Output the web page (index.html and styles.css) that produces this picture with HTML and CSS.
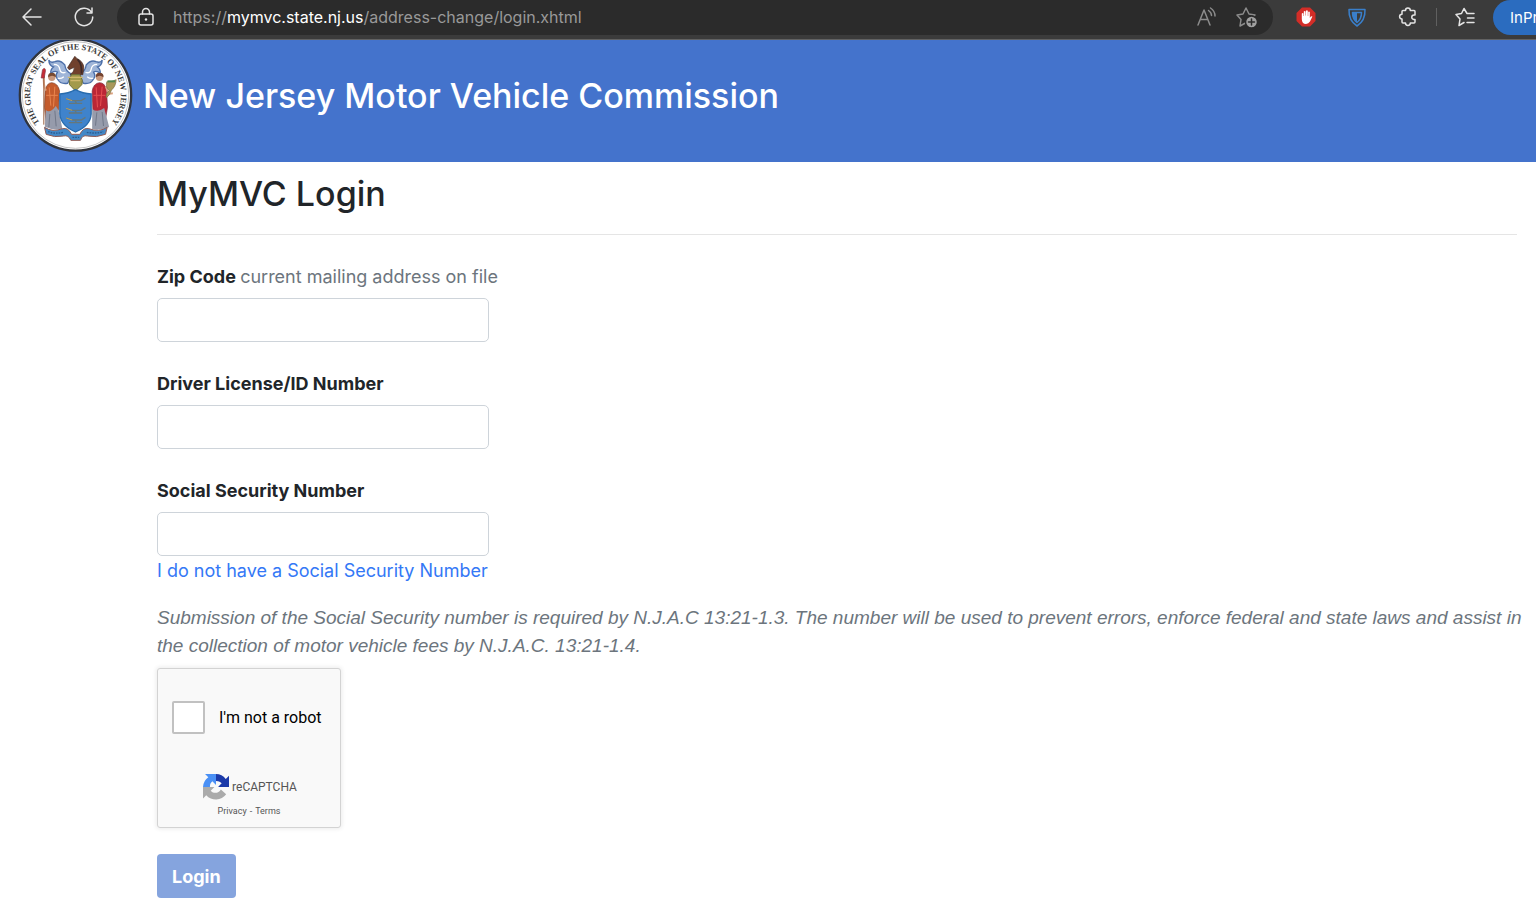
FILE: index.html
```
<!DOCTYPE html>
<html lang="en">
<head>
    <meta charset="UTF-8">
    <title>MyMVC Login</title>
    <link rel="stylesheet" href="styles.css">
</head>
<body>
    <!-- browser toolbar -->
    <div class="toolbar">
        <button class="tool back" aria-label="Back">
            <svg width="22" height="22" viewBox="0 0 22 22"><path d="M20 11H2M10 3L2 11l8 8"/></svg>
        </button>
        <button class="tool reload" aria-label="Refresh">
            <svg width="22" height="22" viewBox="0 0 22 22"><path d="M18.500 6.500A8.700 8.700 0 1 0 19.700 11M19 2v5h-5"/></svg>
        </button>
        <div class="address">
            <svg class="lock" width="18" height="20" viewBox="0 0 18 20"><rect x="2" y="7" width="14" height="11" rx="2"/><path d="M5.500 7V5a3.500 3.500 0 0 1 7 0v2"/><circle class="dot" cx="9" cy="12.500" r="1.200"/></svg>
            <span class="url">https://<span class="host">mymvc.state.nj.us</span>/address-change/login.xhtml</span>
            <button class="tool dim" aria-label="Read aloud">
                <svg width="22" height="22" viewBox="0 0 22 22"><path d="M2 19L8 4l6 15M4.500 13.500h7M12.500 4.500q3 2 3 5M14.500 2q4.500 3 4.500 8"/></svg>
            </button>
            <button class="tool dim" aria-label="Add to favorites">
                <svg width="22" height="22" viewBox="0 0 22 22"><path d="M9.500 17l-5.500 3 1-6.500-4-4.500 6-1L10 2l3 6 6 1-2 2"/><circle class="plus-bg" cx="15.500" cy="16" r="6"/><path class="plus" d="M15.500 13v6M12.500 16h6"/></svg>
            </button>
        </div>
        <div class="extensions">
            <button class="tool" aria-label="Ad blocker">
                <svg width="20" height="20" viewBox="0 0 20 20"><path fill="#d32d27" stroke="none" d="M6 .5h8L19.500 6v8L14 19.500H6L.5 14V6z"/><path fill="#fff" stroke="none" d="M5.800 12V6.500q.8-1 1.600 0V9h.4V4.500q.9-1 1.800 0V8.500h.4V3.800q.9-1 1.800 0V9h.4V5q.8-.9 1.600 0v6l1-1.500q1-.7 1.600.1l-2.400 5q-1.500 2.400-4 2.400-4.200 0-4.200-5z"/></svg>
            </button>
            <button class="tool" aria-label="Privacy shield">
                <svg width="20" height="20" viewBox="0 0 20 20"><path class="shield-line" d="M2 2.500h16q.5 11-8 16.500Q1.500 13.500 2 2.500z"/><path class="shield-line" d="M5.500 5.500h9q0 6.500-4.500 10-4.500-3.500-4.500-10z"/><path fill="#3a7fca" stroke="none" d="M10 5.500v10q-4.500-3.500-4.500-10z"/></svg>
            </button>
            <button class="tool" aria-label="Extensions">
                <svg width="20" height="20" viewBox="0 0 20 20"><path d="M5 3.500h2.500a2.400 2.400 0 0 1 4.800 0H16q1 0 1 1V8h-1a2.200 2.200 0 0 0 0 4.500h1V15q0 1-1 1h-3.700a2.400 2.400 0 0 1-4.800 0H5q-1 0-1-1v-3a2.400 2.400 0 0 1 0-4.800V4.500q0-1 1-1z"/></svg>
            </button>
        </div>
        <span class="divider"></span>
        <button class="tool favorites" aria-label="Favorites">
            <svg width="20" height="20" viewBox="0 0 20 20"><path d="M9 15.500l-5 3 1-6.500L1 7.500l5.500-1L9 1.500l3 5h7M12.500 11H19M12 15.500h7"/></svg>
        </button>
        <button class="private">InPrivate</button>
    </div>

    <header class="banner">
        <!-- state seal -->
        <svg class="seal" width="115" height="112" viewBox="24 18 344 336" role="img" aria-label="New Jersey state seal">
            <defs>
                <path id="ring" d="M100 279A136 136 0 1 1 292 279"/>
            </defs>
            <circle cx="196" cy="183" r="167" fill="#fff" stroke="#30343d" stroke-width="7"/>
            <circle cx="196" cy="183" r="160" fill="none" stroke="#c4c4c4" stroke-width="3"/>
            <text class="seal-text" text-anchor="middle"><textPath href="#ring" startOffset="50%">THE GREAT SEAL OF THE STATE OF NEW JERSEY</textPath></text>
            <!-- mantling -->
            <g fill="#9fb5d8" stroke="#4c6fa9" stroke-width="4">
                <path d="M184 120q-18-8-20-27-14-17-30-10-13 5-18-5 0 16 14 21-10 8-8 20 9-10 20-5-9 13 2 24 8 13 28 10 8-11 12-28z"/>
                <path d="M208 120q18-8 20-27 14-17 30-10 13 5 18-5 0 16-14 21 10 8 8 20-9-10-20-5 9 13-2 24-8 13-28 10-8-11-12-28z"/>
            </g>
            <path fill="none" stroke="#fff" stroke-width="4" d="M131 91q16 0 18 15 3 14 17 9M143 132q8 4 18-4M261 91q-16 0-18 15-3 14-17 9M249 132q-8 4-18-4"/>
            <!-- horse head -->
            <path d="M180 122q14-10 12-22l-15 7-5-6 16-25 6-9 7 7q18 8 20 26l-3 22z" fill="#70402d" stroke="#412a25" stroke-width="2"/>
            <path d="M202 76q14 14 12 43" fill="none" stroke="#3d2928" stroke-width="5"/>
            <path d="M184 122h25q12 18 6 30l-19 19-18-19q-5-14 6-30z" fill="#a39a4c" stroke="#6f713b" stroke-width="3"/>
            <path d="M173 130h45M181 140h29" stroke="#d1b86e" stroke-width="4"/>
            <!-- Liberty -->
            <path d="M103 220l2-52q6-22 20-22 19 2 23 25l-3 55-13 42-24-1z" fill="#c45b2c" stroke="#793d27" stroke-width="2"/>
            <circle cx="125" cy="130" r="11" fill="#c8987c"/>
            <path d="M114 130q-2-14 11-14 14 0 12 14-11-10-23 0z" fill="#784a30"/>
            <path d="M107 170q-8-16-6-45" fill="none" stroke="#d9a280" stroke-width="6"/>
            <path d="M101 115v157" stroke="#985d3c" stroke-width="3"/>
            <path d="M93 132l4-25q8-9 9 3l-4 22z" fill="#c82d35" stroke="#7e3444" stroke-width="2"/>
            <path d="M117 160l5 55M134 158l-4 60M108 184h35" fill="none" stroke="#e9854e" stroke-width="3"/>
            <path d="M104 278l3-50q12 12 30-12l8 13 12 57q-28 4-53-8z" fill="#969bab"/>
            <path d="M119 240l-3 39M134 230l4 47" stroke="#717889" stroke-width="3"/>
            <!-- Prosperity -->
            <path d="M292 220l-3-52q-5-22-21-22-18 2-22 25l2 55 13 42 23-1z" fill="#bb2635" stroke="#78283b" stroke-width="2"/>
            <circle cx="268" cy="130" r="11" fill="#c8987c"/>
            <path d="M257 130q-2-14 11-14 14 0 12 14-11-10-23 0z" fill="#744330"/>
            <path d="M258 160l4 60M276 158l-5 58M250 184h36" fill="none" stroke="#e54e51" stroke-width="3"/>
            <path d="M287 157l8 23 13-2" fill="none" stroke="#d9a280" stroke-width="6"/>
            <path d="M290 143q15 2 28-6-1 20-14 31-5 16-16 24-3-12 9-23-12-9-7-26z" fill="#a9985a" stroke="#786e42" stroke-width="2"/>
            <path d="M292 142h23" stroke="#50864f" stroke-width="6"/>
            <path d="M246 224q15 14 36-2l15 57q-23 11-51 7z" fill="#969bab"/>
            <path d="M260 235l-4 40M276 234l4 42" stroke="#717889" stroke-width="3"/>
            <!-- shield with the three plows -->
            <path d="M149 180q25-1 47-13 22 12 47 13v60q-2 35-47 54-44-19-47-54z" fill="#3f83cc" stroke="#276bad" stroke-width="4"/>
            <g fill="none" stroke="#65777b" stroke-width="4">
                <path d="M168 194l18 6h27l13-8M176 208h40M194 200l6 9"/>
                <path d="M168 223l18 6h27l13-8M176 237h40M194 229l6 9"/>
                <path d="M168 252l18 6h27l13-8M176 266h40M194 258l6 9"/>
            </g>
            <path d="M168 194l18 6M168 223l18 6M168 252l18 6" stroke="#b69e60" stroke-width="3"/>
            <!-- ribbon -->
            <path d="M103 280q24 16 54 4 18-4 27 17h25q10-21 27-17 31 12 55-4l-5 21q-28 11-54 5-16-4-21 13h-29q-7-17-22-13-27 6-52-5z" fill="#4388c7" stroke="#915b54" stroke-width="3"/>
            <path class="ribbon-mark" d="M114 293q20 8 45 2M230 295q27 5 49-2M187 310h20"/>
        </svg>
        <h1 class="banner-title">New Jersey Motor Vehicle Commission</h1>
    </header>

    <main class="content">
        <h2 class="page-title">MyMVC Login</h2>
        <form class="login-form">
            <div class="field">
                <label for="zip">Zip Code <span class="hint">current mailing address on file</span></label>
                <input type="text" id="zip">
            </div>
            <div class="field">
                <label for="license">Driver License/ID Number</label>
                <input type="text" id="license">
            </div>
            <div class="field ssn">
                <label for="ssn">Social Security Number</label>
                <input type="text" id="ssn">
                <a href="#">I do not have a Social Security Number</a>
            </div>
            <p class="notice">Submission of the Social Security number is required by N.J.A.C 13:21-1.3. The number will be used to prevent errors, enforce federal and state laws and assist in the collection of motor vehicle fees by N.J.A.C. 13:21-1.4.</p>

            <div class="captcha">
                <div class="captcha-check">
                    <input type="checkbox" id="robot">
                    <label for="robot">I'm not a robot</label>
                </div>
                <div class="captcha-brand">
                    <svg width="26" height="26" viewBox="0 0 64 64">
                        <path fill="#1c3aa9" d="M64 32V4l-8 8A31 31 0 0 0 32 0v17c8 0 11 3 14 6l-9 9z"/>
                        <path fill="#4a90f5" d="M32 0H5l8 8A31 31 0 0 0 0 32h17c0-8 3-11 6-14l9 9z"/>
                        <path fill="#ababab" d="M0 32v28l8-8a31 31 0 0 0 49-2L44 38c-5 9-17 12-25 3l9-9z"/>
                    </svg>
                    <span>reCAPTCHA</span>
                </div>
                <div class="captcha-links"><a href="#">Privacy</a> <span>-</span> <a href="#">Terms</a></div>
            </div>

            <button type="submit" class="login-button">Login</button>
        </form>
    </main>
</body>
</html>
```

FILE: styles.css
```
* {
    box-sizing: border-box;
}

body {
    margin: 0;
    background-color: #fff;
    color: #212529;
    font-family: Inter, "Liberation Sans", sans-serif;
    font-size: 18px;
    line-height: 28px;
    overflow-x: hidden;
}

a {
    color: #3478f6;
    text-decoration: none;
}

/* browser toolbar */
.toolbar {
    display: flex;
    align-items: center;
    height: 40px;
    padding: 0 0 5px 21px;
    background-color: #3b3b3b;
    border-bottom: 1px solid #626262;
    overflow: hidden;
}

.tool {
    display: flex;
    flex-shrink: 0;
    padding: 0;
    border: none;
    background: none;
}

.toolbar svg {
    fill: none;
    stroke: #e4e4e4;
    stroke-width: 1.5;
    stroke-linecap: round;
    stroke-linejoin: round;
}

.toolbar .shield-line {
    stroke: #3a7fca;
}

.reload {
    margin-left: 30px;
}

.address {
    display: flex;
    flex: 1;
    align-items: center;
    gap: 18px;
    height: 36px;
    margin-left: 22px;
    padding: 0 15px 0 20px;
    border-radius: 18px;
    background-color: #2b2b2b;
}

.address .dot {
    fill: #e4e4e4;
    stroke: none;
}

.url {
    flex: 1;
    color: #999;
    font-size: 16px;
    white-space: nowrap;
}

.host {
    color: #fff;
}

.toolbar .dim svg {
    stroke: #8c8c8c;
}

.toolbar .plus-bg {
    fill: #a0a0a0;
    stroke: #2b2b2b;
}

.toolbar .plus {
    stroke: #2b2b2b;
}

.extensions {
    display: flex;
    gap: 31px;
    margin: 0 18px 0 23px;
}

.divider {
    width: 1px;
    height: 18px;
    background-color: #606060;
}

.favorites {
    margin: 0 18px;
}

/* runs off the right edge of the window */
.private {
    flex-shrink: 0;
    width: 120px;
    height: 35px;
    margin-right: -77px;
    padding: 0 17px;
    border: none;
    border-radius: 18px;
    background-color: #2b6cbf;
    color: #fff;
    font-family: inherit;
    font-size: 15px;
    text-align: left;
}

/* site banner */
.banner {
    display: flex;
    align-items: center;
    gap: 10px;
    padding: 0 18px 10px;
    background-color: #4473cc;
}

.seal {
    flex-shrink: 0;
}

.seal-text {
    font-family: "Liberation Serif", serif;
    font-size: 25px;
    font-weight: bold;
    fill: #3c3c3c;
}

.ribbon-mark {
    fill: none;
    stroke: #2c5c91;
    stroke-width: 4;
    stroke-dasharray: 5 3;
}

.banner-title,
.page-title {
    margin: 0;
    font-size: 34px;
    font-weight: 500;
    line-height: 44px;
}

.banner-title {
    color: #fff;
}

/* login form */
.content {
    padding: 10px 19px 14px 157px;
}

.page-title {
    padding-bottom: 18px;
    border-bottom: 1px solid #e5e5e5;
}

.login-form {
    padding-top: 28px;
}

.field {
    display: flex;
    flex-direction: column;
    align-items: flex-start;
    margin-bottom: 28px;
}

.field label {
    margin-bottom: 7px;
    font-weight: 700;
}

.field .hint {
    color: #6c757d;
    font-weight: 400;
}

.field input {
    width: 332px;
    height: 44px;
    padding: 7px 14px;
    border: 1px solid #ced4da;
    border-radius: 5px;
    background-color: #fff;
    font: inherit;
}

.field a {
    margin-top: 1px;
}

.ssn {
    margin-bottom: 19px;
}

.notice {
    margin: 0 -10px 8px 0;
    color: #6c757d;
    font-family: "Liberation Sans", Arial, sans-serif;
    font-size: 19px;
    font-style: italic;
}

/* captcha box */
.captcha {
    display: flex;
    flex-direction: column;
    align-items: center;
    width: 184px;
    height: 160px;
    margin-bottom: 26px;
    padding-top: 32px;
    border: 1px solid #d3d3d3;
    border-radius: 3px;
    background-color: #f9f9f9;
    box-shadow: 0 0 4px 1px rgba(0, 0, 0, 0.08);
    color: #555;
    font-family: Roboto, sans-serif;
}

.captcha-check {
    display: flex;
    align-items: center;
    align-self: flex-start;
    gap: 14px;
    margin: 0 0 40px 14px;
    color: #000;
    font-size: 16px;
}

.captcha-check input {
    appearance: none;
    width: 33px;
    height: 33px;
    margin: 0;
    border: 2px solid #c1c1c1;
    border-radius: 2px;
    background-color: #fff;
}

.captcha-brand {
    display: flex;
    align-items: center;
    gap: 3px;
    padding-left: 2px;
    font-size: 12px;
    line-height: 26px;
}

.captcha-links {
    display: flex;
    gap: 3px;
    margin-top: 4px;
    font-size: 9px;
    line-height: 14px;
}

.captcha-links a {
    color: #555;
}

.login-button {
    display: block;
    height: 44px;
    padding: 0 15px;
    border: none;
    border-radius: 4px;
    background-color: #85a4de;
    color: #fff;
    font-family: inherit;
    font-size: 18px;
    font-weight: 700;
}
```
